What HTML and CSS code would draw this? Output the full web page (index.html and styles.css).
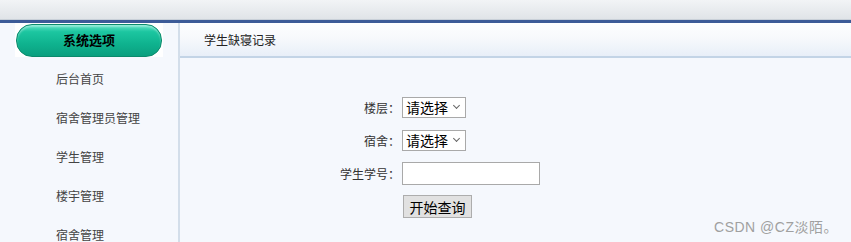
FILE: index.html
```html
<!DOCTYPE html>
<html lang="zh-CN">
<head>
  <meta charset="UTF-8">
  <title>学生缺寝记录</title>
  <link rel="stylesheet" href="styles.css">
</head>
<body>
  <div class="topbar"></div>

  <div class="contenedor">
    <div class="lateral">
      <div class="opciones">
        <div class="pastilla">系统选项</div>
      </div>
      <ul class="menu">
        <li>后台首页</li>
        <li>宿舍管理员管理</li>
        <li>学生管理</li>
        <li>楼宇管理</li>
        <li>宿舍管理</li>
      </ul>
    </div>

    <div class="principal">
      <div class="titulo">学生缺寝记录</div>
      <form class="consulta" onsubmit="return false">
        <div class="fila">
          <label>楼层：</label>
          <span class="envoltura"><select class="sel"><option>请选择</option></select></span>
        </div>
        <div class="fila">
          <label>宿舍：</label>
          <span class="envoltura"><select class="sel"><option>请选择</option></select></span>
        </div>
        <div class="fila">
          <label>学生学号：</label>
          <input type="text" class="caja">
        </div>
        <div class="fila">
          <label></label>
          <button type="submit" class="boton">开始查询</button>
        </div>
      </form>
    </div>
  </div>

  <div class="marca">CSDN @CZ淡陌。</div>
</body>
</html>
```

FILE: styles.css
```css
body {
  margin: 0;
  padding: 0;
  font-family: "Noto Sans CJK SC", "DejaVu Sans", sans-serif;
  font-size: 12px;
  color: #333;
  background-color: #f5f8fd;
  height: 242px;
  overflow: hidden;
  position: relative;
}
.topbar {
  height: 20px;
  background: linear-gradient(#f2f4f6, #dfe3e7);
  border-bottom: 3px solid #3c5b98;
  box-shadow: inset 0 -1px 0 #c9d0d8;
}
.contenedor {
  display: flex;
  height: 219px;
}
.lateral {
  width: 178px;
  border-right: 2px solid #d3deea;
  background-color: #f5f8fd;
}
.opciones {
  width: 148px;
  height: 34px;
  margin: 0 0 0 15px;
  background: #fff;
  display: flex;
  align-items: center;
  justify-content: center;
}
.pastilla {
  width: 144px;
  height: 30px;
  border: 1px solid #0b8a6c;
  border-radius: 16px;
  background: linear-gradient(#5fe2c6 0%, #1cc6a0 22%, #0fb38f 60%, #0a9f7f 100%);
  box-shadow: inset 0 2px 2px rgba(255,255,255,0.35);
  font-weight: bold;
  font-size: 13px;
  color: #000;
  display: flex;
  align-items: center;
  justify-content: center;
  padding-bottom: 1px;
  box-sizing: content-box;
}
.menu {
  list-style: none;
  margin: 0;
  padding: 2px 0 0 0;
}
.menu li {
  height: 39px;
  line-height: 39px;
  padding-left: 56px;
  color: #444;
}
.principal {
  flex: 1;
}
.titulo {
  height: 33px;
  line-height: 33px;
  padding-left: 24px;
  background: linear-gradient(#fdfeff 0%, #f7f9fc 45%, #e8eff8 100%);
  border-bottom: 2px solid #c3d4e6;
  color: #222;
}
.consulta {
  padding-top: 33px;
}
.fila {
  display: flex;
  align-items: center;
  height: 33px;
}
.fila label {
  width: 220px;
  text-align: right;
  color: #333;
}
.envoltura {
  position: relative;
  margin-left: 2px;
  display: inline-block;
  height: 21px;
}
.envoltura::after {
  content: "";
  position: absolute;
  right: 7px;
  top: 6px;
  width: 4px;
  height: 4px;
  border-right: 1px solid #666;
  border-bottom: 1px solid #666;
  transform: rotate(45deg);
  pointer-events: none;
}
.sel {
  appearance: none;
  -webkit-appearance: none;
  width: 64px;
  height: 21px;
  font-size: 14px;
  font-family: "Noto Sans CJK SC", sans-serif;
  border: 1px solid #a9a9a9;
  border-radius: 0;
  background: #fff;
  color: #000;
  padding: 0 0 0 3px;
  line-height: 19px;
}
.caja {
  margin-left: 2px;
  width: 134px;
  height: 19px;
  border: 1px solid #a9a9a9;
  padding: 1px;
  background: #fff;
}
.boton {
  margin-left: 3px;
  width: 69px;
  height: 23px;
  font-size: 14px;
  font-family: "Noto Sans CJK SC", sans-serif;
  background: #e1e1e1;
  border: 1px solid #adadad;
  color: #000;
  padding: 0;
}
.marca {
  position: absolute;
  right: 13px;
  bottom: 6px;
  font-family: "Liberation Sans", "Noto Sans CJK SC", sans-serif;
  font-size: 14px;
  letter-spacing: 0.5px;
  color: #a0a0a0;
}
```
